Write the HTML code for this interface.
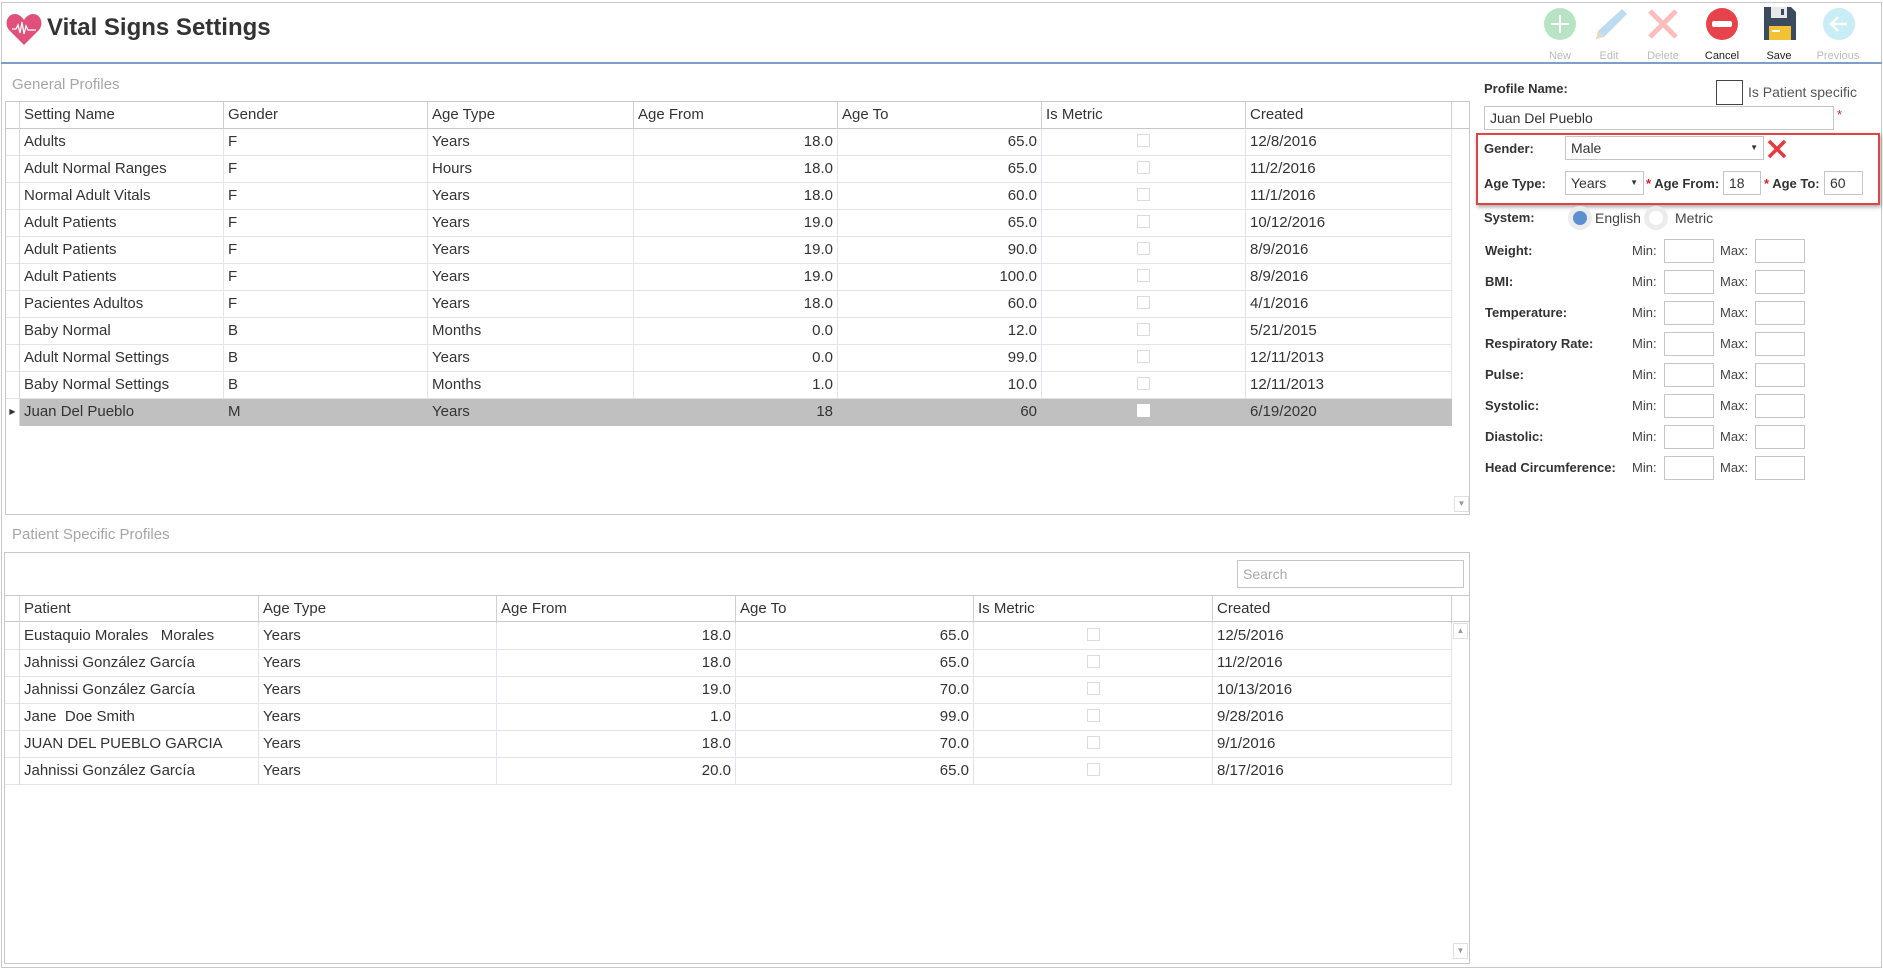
<!DOCTYPE html>
<html><head><meta charset="utf-8"><style>
*{box-sizing:border-box;margin:0;padding:0}
body{width:1883px;height:971px;background:#fff;font-family:"Segoe UI","Liberation Sans",sans-serif;color:#333;position:relative;overflow:hidden}
.abs{position:absolute}
.outer{left:1px;top:2px;width:1881px;height:966px;border:1px solid #c8c8c8}
.hdr{left:1px;top:62px;width:1881px;height:2px;background:#7f9fc8}
.title{left:47px;top:14px;font-size:24px;font-weight:bold;color:#333}
.tb{top:50px;font-size:11px;width:70px;text-align:center;color:#bbb}
.tb.on{color:#222}
.sec{font-size:15px;color:#a6a6a6}
.grid{border:1px solid #c8c8c8;background:#fff}
.row{position:absolute;left:0;height:27px;display:flex;font-size:15px;line-height:26px;border-bottom:1px solid #e3e3e3}
.row div{height:27px;padding:0 4px;white-space:nowrap;overflow:hidden;border-right:1px solid #dfe5ee}
.row .ind{border-right:1px solid #d8d8d8;padding:0}
.row .r{text-align:right}
.row .c{text-align:center}
.hrow{border-bottom:1px solid #c8c8c8;border-top:none}
.hrow div{border-right:1px solid #d0d0d0}
.cb{display:inline-block;width:13px;height:13px;border:1px solid #dcdcdc;background:#fff;vertical-align:middle;margin-top:-4px}
.sel{background:#c0c0c0}
.sel div{border-right-color:#c0c0c0}
.lbl{font-size:13px;font-weight:bold;color:#333}
.inp{border:1px solid #c6c6c6;background:#fff;font-size:14px;line-height:22px;padding-left:5px}
.sm{font-size:13px;color:#444}
.ast{color:#e02020;font-size:13px}
</style></head><body>
<div class="abs outer"></div>
<div class="abs hdr"></div>
<svg class="abs" style="left:6px;top:12px" width="36" height="34" viewBox="0 0 36 34"><path d="M18 33 L3 18 C-2 12 1 2 9 2 C13 2 16 5 18 8 C20 5 23 2 27 2 C35 2 38 12 33 18 Z" fill="#e0507a"/><polyline points="6,17 10,17 12,13 14,21 16,10 18,22 20,14 22,18 30,18" fill="none" stroke="#fff" stroke-width="1.3"/></svg>
<div class="abs title">Vital Signs Settings</div>
<!-- toolbar -->
<svg class="abs" style="left:1543px;top:7px" width="34" height="34"><circle cx="17" cy="17" r="16" fill="#b9e3c5"/><path d="M17 8v18M8 17h18" stroke="#fff" stroke-width="2"/></svg>
<div class="abs tb" style="left:1525px">New</div>
<svg class="abs" style="left:1592px;top:6px" width="36" height="36"><path d="M30 3 L35 8 L12 31 L4 33 L6 25 Z" fill="#bcdcef"/><path d="M6 25 L12 31 L4 33Z" fill="#e8d9c4"/></svg>
<div class="abs tb" style="left:1574px">Edit</div>
<svg class="abs" style="left:1646px;top:7px" width="34" height="34"><path d="M4 4L30 30M30 4L4 30" stroke="#ffbcbc" stroke-width="5"/></svg>
<div class="abs tb" style="left:1628px">Delete</div>
<svg class="abs" style="left:1705px;top:7px" width="34" height="34"><circle cx="17" cy="17" r="16" fill="#e6434a"/><rect x="7" y="14" width="20" height="6" rx="2" fill="#fff"/></svg>
<div class="abs tb on" style="left:1687px">Cancel</div>
<svg class="abs" style="left:1764px;top:7px" width="32" height="33"><path d="M0 0H27L32 5V33H0Z" fill="#3c4a5e"/><rect x="7" y="0" width="16" height="11" fill="#e8e8e8"/><rect x="17" y="2" width="3" height="6" fill="#3c4a5e"/><rect x="5" y="19" width="22" height="14" fill="#f1c233"/><rect x="8" y="23" width="8" height="2" fill="#fff"/></svg>
<div class="abs tb on" style="left:1744px">Save</div>
<svg class="abs" style="left:1822px;top:7px" width="34" height="34"><circle cx="17" cy="17" r="16" fill="#c8edf4"/><path d="M25 17H10M16 10L9 17L16 24" fill="none" stroke="#fff" stroke-width="2.5"/></svg>
<div class="abs tb" style="left:1803px">Previous</div>

<div class="abs sec" style="left:12px;top:76px">General Profiles</div>
<div class="abs grid" style="left:5px;top:101px;width:1465px;height:414px">
 <div class="row hrow" style="top:0;height:27px"><div class="ind" style="width:14px"></div><div style="width:204px">Setting Name</div><div style="width:204px">Gender</div><div style="width:206px">Age Type</div><div style="width:204px">Age From</div><div style="width:204px">Age To</div><div style="width:204px">Is Metric</div><div style="width:206px">Created</div><div style="width:17px;border:none"></div></div>
 <div class="row" style="top:27px"><div class="ind" style="width:14px"></div><div style="width:204px">Adults</div><div style="width:204px">F</div><div style="width:206px">Years</div><div class="r" style="width:204px">18.0</div><div class="r" style="width:204px">65.0</div><div class="c" style="width:204px"><span class="cb"></span></div><div style="width:206px">12/8/2016</div></div>
 <div class="row" style="top:54px"><div class="ind" style="width:14px"></div><div style="width:204px">Adult Normal Ranges</div><div style="width:204px">F</div><div style="width:206px">Hours</div><div class="r" style="width:204px">18.0</div><div class="r" style="width:204px">65.0</div><div class="c" style="width:204px"><span class="cb"></span></div><div style="width:206px">11/2/2016</div></div>
 <div class="row" style="top:81px"><div class="ind" style="width:14px"></div><div style="width:204px">Normal Adult Vitals</div><div style="width:204px">F</div><div style="width:206px">Years</div><div class="r" style="width:204px">18.0</div><div class="r" style="width:204px">60.0</div><div class="c" style="width:204px"><span class="cb"></span></div><div style="width:206px">11/1/2016</div></div>
 <div class="row" style="top:108px"><div class="ind" style="width:14px"></div><div style="width:204px">Adult Patients</div><div style="width:204px">F</div><div style="width:206px">Years</div><div class="r" style="width:204px">19.0</div><div class="r" style="width:204px">65.0</div><div class="c" style="width:204px"><span class="cb"></span></div><div style="width:206px">10/12/2016</div></div>
 <div class="row" style="top:135px"><div class="ind" style="width:14px"></div><div style="width:204px">Adult Patients</div><div style="width:204px">F</div><div style="width:206px">Years</div><div class="r" style="width:204px">19.0</div><div class="r" style="width:204px">90.0</div><div class="c" style="width:204px"><span class="cb"></span></div><div style="width:206px">8/9/2016</div></div>
 <div class="row" style="top:162px"><div class="ind" style="width:14px"></div><div style="width:204px">Adult Patients</div><div style="width:204px">F</div><div style="width:206px">Years</div><div class="r" style="width:204px">19.0</div><div class="r" style="width:204px">100.0</div><div class="c" style="width:204px"><span class="cb"></span></div><div style="width:206px">8/9/2016</div></div>
 <div class="row" style="top:189px"><div class="ind" style="width:14px"></div><div style="width:204px">Pacientes Adultos</div><div style="width:204px">F</div><div style="width:206px">Years</div><div class="r" style="width:204px">18.0</div><div class="r" style="width:204px">60.0</div><div class="c" style="width:204px"><span class="cb"></span></div><div style="width:206px">4/1/2016</div></div>
 <div class="row" style="top:216px"><div class="ind" style="width:14px"></div><div style="width:204px">Baby Normal</div><div style="width:204px">B</div><div style="width:206px">Months</div><div class="r" style="width:204px">0.0</div><div class="r" style="width:204px">12.0</div><div class="c" style="width:204px"><span class="cb"></span></div><div style="width:206px">5/21/2015</div></div>
 <div class="row" style="top:243px"><div class="ind" style="width:14px"></div><div style="width:204px">Adult Normal Settings</div><div style="width:204px">B</div><div style="width:206px">Years</div><div class="r" style="width:204px">0.0</div><div class="r" style="width:204px">99.0</div><div class="c" style="width:204px"><span class="cb"></span></div><div style="width:206px">12/11/2013</div></div>
 <div class="row" style="top:270px"><div class="ind" style="width:14px"></div><div style="width:204px">Baby Normal Settings</div><div style="width:204px">B</div><div style="width:206px">Months</div><div class="r" style="width:204px">1.0</div><div class="r" style="width:204px">10.0</div><div class="c" style="width:204px"><span class="cb"></span></div><div style="width:206px">12/11/2013</div></div>
 <div class="row" style="top:297px;border-bottom:none"><div class="ind" style="width:14px;font-size:8px;text-align:center;color:#333">&#9654;</div><div class="sel" style="width:204px;border-right-color:#c0c0c0">Juan Del Pueblo</div><div class="sel" style="width:204px;border-right-color:#c0c0c0">M</div><div class="sel" style="width:206px;border-right-color:#c0c0c0">Years</div><div class="sel r" style="width:204px;border-right-color:#c0c0c0">18</div><div class="sel r" style="width:204px;border-right-color:#c0c0c0">60</div><div class="sel c" style="width:204px;border-right-color:#c0c0c0"><span class="cb" style="border-color:#fff"></span></div><div class="sel" style="width:206px;border-right-color:#c0c0c0">6/19/2020</div></div>
 <div class="abs" style="left:1448px;top:394px;width:15px;height:16px;border:1px solid #e0e0e0;font-size:8px;color:#999;text-align:center;line-height:14px">&#9660;</div>
</div>

<div class="abs sec" style="left:12px;top:526px">Patient Specific Profiles</div>
<div class="abs grid" style="left:4px;top:552px;width:1466px;height:412px">
 <div class="abs inp" style="left:1232px;top:7px;width:227px;height:28px;color:#aaa;line-height:26px">Search</div>
 <div class="row hrow" style="top:42px;border-top:1px solid #c8c8c8"><div class="ind" style="width:15px"></div><div style="width:239px">Patient</div><div style="width:238px">Age Type</div><div style="width:239px">Age From</div><div style="width:238px">Age To</div><div style="width:239px">Is Metric</div><div style="width:239px">Created</div><div style="width:17px;border:none"></div></div>
 <div class="row" style="top:70px"><div class="ind" style="width:15px"></div><div style="width:239px">Eustaquio Morales&nbsp;&nbsp; Morales</div><div style="width:238px">Years</div><div class="r" style="width:239px">18.0</div><div class="r" style="width:238px">65.0</div><div class="c" style="width:239px"><span class="cb"></span></div><div style="width:239px">12/5/2016</div></div>
 <div class="row" style="top:97px"><div class="ind" style="width:15px"></div><div style="width:239px">Jahnissi González García</div><div style="width:238px">Years</div><div class="r" style="width:239px">18.0</div><div class="r" style="width:238px">65.0</div><div class="c" style="width:239px"><span class="cb"></span></div><div style="width:239px">11/2/2016</div></div>
 <div class="row" style="top:124px"><div class="ind" style="width:15px"></div><div style="width:239px">Jahnissi González García</div><div style="width:238px">Years</div><div class="r" style="width:239px">19.0</div><div class="r" style="width:238px">70.0</div><div class="c" style="width:239px"><span class="cb"></span></div><div style="width:239px">10/13/2016</div></div>
 <div class="row" style="top:151px"><div class="ind" style="width:15px"></div><div style="width:239px">Jane&nbsp; Doe Smith</div><div style="width:238px">Years</div><div class="r" style="width:239px">1.0</div><div class="r" style="width:238px">99.0</div><div class="c" style="width:239px"><span class="cb"></span></div><div style="width:239px">9/28/2016</div></div>
 <div class="row" style="top:178px"><div class="ind" style="width:15px"></div><div style="width:239px">JUAN DEL PUEBLO GARCIA</div><div style="width:238px">Years</div><div class="r" style="width:239px">18.0</div><div class="r" style="width:238px">70.0</div><div class="c" style="width:239px"><span class="cb"></span></div><div style="width:239px">9/1/2016</div></div>
 <div class="row" style="top:205px"><div class="ind" style="width:15px"></div><div style="width:239px">Jahnissi González García</div><div style="width:238px">Years</div><div class="r" style="width:239px">20.0</div><div class="r" style="width:238px">65.0</div><div class="c" style="width:239px"><span class="cb"></span></div><div style="width:239px">8/17/2016</div></div>
 <div class="abs" style="left:1448px;top:70px;width:15px;height:16px;border:1px solid #e0e0e0;font-size:8px;color:#999;text-align:center;line-height:14px">&#9650;</div>
 <div class="abs" style="left:1448px;top:390px;width:15px;height:16px;border:1px solid #e0e0e0;font-size:8px;color:#999;text-align:center;line-height:14px">&#9660;</div>
</div>

<!-- right panel -->
<div class="abs lbl" style="left:1484px;top:81px">Profile Name:</div>
<div class="abs" style="left:1716px;top:80px;width:27px;height:25px;border:1px solid #444;background:#fff"></div>
<div class="abs sm" style="left:1748px;top:84px;font-size:14px;color:#555">Is Patient specific</div>
<div class="abs inp" style="left:1484px;top:106px;width:350px;height:24px">Juan Del Pueblo</div>
<div class="abs ast" style="left:1837px;top:107px">*</div>
<div class="abs" style="left:1476px;top:133px;width:404px;height:72px;border:2px solid #e04444;box-shadow:1px 2px 4px rgba(0,0,0,.35)"></div>
<div class="abs lbl" style="left:1484px;top:141px">Gender:</div>
<div class="abs inp" style="left:1565px;top:136px;width:199px;height:24px">Male<span style="position:absolute;right:5px;top:0;font-size:8px;color:#333">&#9660;</span></div>
<svg class="abs" style="left:1767px;top:139px" width="20" height="20"><path d="M2 2L18 18M18 2L2 18" stroke="#e8373d" stroke-width="3.5"/></svg>
<div class="abs lbl" style="left:1484px;top:176px">Age Type:</div>
<div class="abs inp" style="left:1565px;top:171px;width:79px;height:24px">Years<span style="position:absolute;right:5px;top:0;font-size:8px;color:#333">&#9660;</span></div>
<div class="abs lbl" style="left:1646px;top:176px"><span class="ast">*</span> Age From:</div>
<div class="abs inp" style="left:1723px;top:171px;width:38px;height:24px">18</div>
<div class="abs lbl" style="left:1764px;top:176px"><span class="ast">*</span> Age To:</div>
<div class="abs inp" style="left:1824px;top:171px;width:39px;height:24px">60</div>
<div class="abs lbl" style="left:1484px;top:210px">System:</div>
<div class="abs" style="left:1568px;top:206px;width:24px;height:24px;border-radius:50%;background:#ececec"></div>
<div class="abs" style="left:1573px;top:211px;width:14px;height:14px;border-radius:50%;background:#5b8fcf"></div>
<div class="abs sm" style="left:1595px;top:210px;font-size:14px">English</div>
<div class="abs" style="left:1644px;top:206px;width:24px;height:24px;border-radius:50%;background:#ececec"></div>
<div class="abs" style="left:1649px;top:211px;width:14px;height:14px;border-radius:50%;background:#fff"></div>
<div class="abs sm" style="left:1675px;top:210px;font-size:14px">Metric</div>

<div class="abs lbl" style="left:1485px;top:243px">Weight:</div><div class="abs sm" style="left:1632px;top:243px">Min:</div><div class="abs inp" style="left:1664px;top:239px;width:50px;height:24px"></div><div class="abs sm" style="left:1720px;top:243px">Max:</div><div class="abs inp" style="left:1755px;top:239px;width:50px;height:24px"></div>
<div class="abs lbl" style="left:1485px;top:274px">BMI:</div><div class="abs sm" style="left:1632px;top:274px">Min:</div><div class="abs inp" style="left:1664px;top:270px;width:50px;height:24px"></div><div class="abs sm" style="left:1720px;top:274px">Max:</div><div class="abs inp" style="left:1755px;top:270px;width:50px;height:24px"></div>
<div class="abs lbl" style="left:1485px;top:305px">Temperature:</div><div class="abs sm" style="left:1632px;top:305px">Min:</div><div class="abs inp" style="left:1664px;top:301px;width:50px;height:24px"></div><div class="abs sm" style="left:1720px;top:305px">Max:</div><div class="abs inp" style="left:1755px;top:301px;width:50px;height:24px"></div>
<div class="abs lbl" style="left:1485px;top:336px">Respiratory Rate:</div><div class="abs sm" style="left:1632px;top:336px">Min:</div><div class="abs inp" style="left:1664px;top:332px;width:50px;height:24px"></div><div class="abs sm" style="left:1720px;top:336px">Max:</div><div class="abs inp" style="left:1755px;top:332px;width:50px;height:24px"></div>
<div class="abs lbl" style="left:1485px;top:367px">Pulse:</div><div class="abs sm" style="left:1632px;top:367px">Min:</div><div class="abs inp" style="left:1664px;top:363px;width:50px;height:24px"></div><div class="abs sm" style="left:1720px;top:367px">Max:</div><div class="abs inp" style="left:1755px;top:363px;width:50px;height:24px"></div>
<div class="abs lbl" style="left:1485px;top:398px">Systolic:</div><div class="abs sm" style="left:1632px;top:398px">Min:</div><div class="abs inp" style="left:1664px;top:394px;width:50px;height:24px"></div><div class="abs sm" style="left:1720px;top:398px">Max:</div><div class="abs inp" style="left:1755px;top:394px;width:50px;height:24px"></div>
<div class="abs lbl" style="left:1485px;top:429px">Diastolic:</div><div class="abs sm" style="left:1632px;top:429px">Min:</div><div class="abs inp" style="left:1664px;top:425px;width:50px;height:24px"></div><div class="abs sm" style="left:1720px;top:429px">Max:</div><div class="abs inp" style="left:1755px;top:425px;width:50px;height:24px"></div>
<div class="abs lbl" style="left:1485px;top:460px">Head Circumference:</div><div class="abs sm" style="left:1632px;top:460px">Min:</div><div class="abs inp" style="left:1664px;top:456px;width:50px;height:24px"></div><div class="abs sm" style="left:1720px;top:460px">Max:</div><div class="abs inp" style="left:1755px;top:456px;width:50px;height:24px"></div>
</body></html>
